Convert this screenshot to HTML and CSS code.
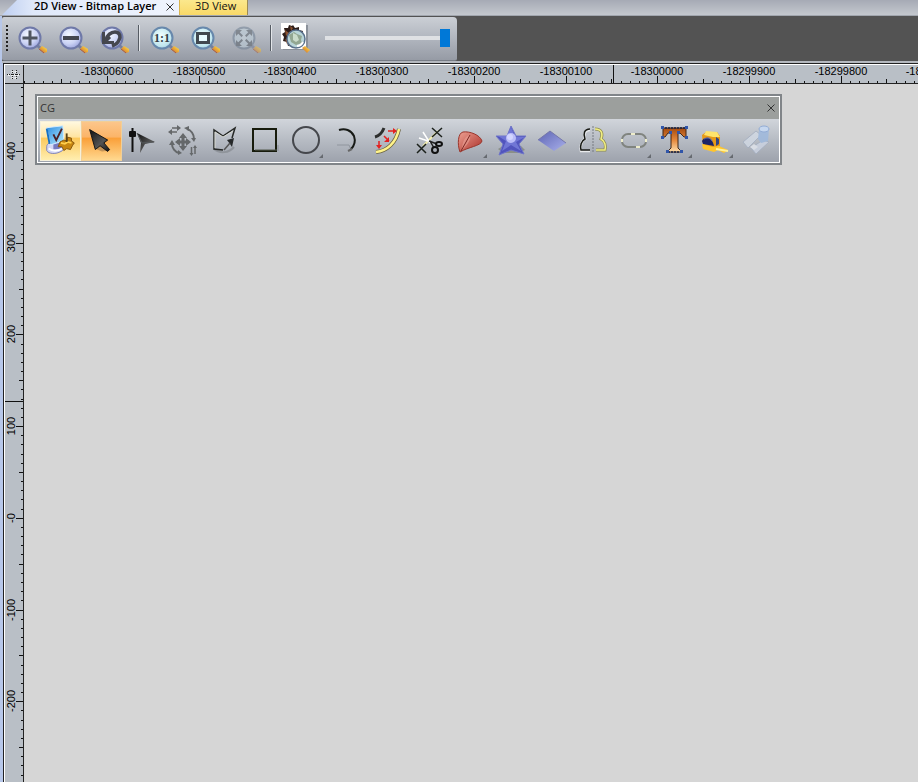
FILE: index.html
```html
<!DOCTYPE html>
<html lang="en">
<head>
<meta charset="utf-8">
<title>2D View - Bitmap Layer</title>
<link rel="stylesheet" href="styles.css">
</head>
<body>
<svg class="defs" aria-hidden="true">
  <defs>
    <radialGradient id="lens" cx=".4" cy=".35" r=".7"><stop offset="0" stop-color="#f4f8ff"/><stop offset=".6" stop-color="#cbd3f5"/><stop offset="1" stop-color="#9aa3dc"/></radialGradient>
    <radialGradient id="lensCyan" cx=".45" cy=".4" r=".7"><stop offset="0" stop-color="#f2ffff"/><stop offset=".7" stop-color="#c0e6ee"/><stop offset="1" stop-color="#8fb4d0"/></radialGradient>
    <linearGradient id="handle" x1="0" y1="1" x2="1" y2="0"><stop offset="0" stop-color="#b4683c"/><stop offset=".5" stop-color="#e8a338"/><stop offset="1" stop-color="#fff04a"/></linearGradient>
    <linearGradient id="arrow" x1="0" y1="0" x2="1" y2="1"><stop offset="0" stop-color="#111"/><stop offset=".6" stop-color="#555"/><stop offset="1" stop-color="#111"/></linearGradient>
    <linearGradient id="screen" x1="0" y1="0" x2="1" y2="1"><stop offset="0" stop-color="#2c8be0"/><stop offset="1" stop-color="#b5ecff"/></linearGradient>
    <linearGradient id="red" x1="0" y1="0" x2="1" y2="1"><stop offset="0" stop-color="#eda092"/><stop offset="1" stop-color="#a92e28"/></linearGradient>
    <linearGradient id="blue" x1="0" y1="0" x2="1" y2="1"><stop offset="0" stop-color="#5d64b4"/><stop offset="1" stop-color="#a9b0ea"/></linearGradient>
    <linearGradient id="bronze" x1="0" y1="0" x2="0" y2="1"><stop offset="0" stop-color="#a34a10"/><stop offset=".5" stop-color="#e5873a"/><stop offset="1" stop-color="#ffe0ae"/></linearGradient>
    <g id="grip">
      <path d="M25 26l3 3" stroke="#777f9c" stroke-width="3"/>
      <path d="M27 30l3-3 5 3 0 3-3 1z" fill="url(#handle)"/>
      <path d="M27 30l5 4" stroke="#a55a48" stroke-width="1"/>
    </g>
    <path id="more" d="M37 33v4h-4z" fill="#666a70"/>
  </defs>
</svg>

<div class="app">
  <nav class="tabs">
    <a class="tab active" href="#view2d">2D View - Bitmap Layer</a>
    <button class="tab-close" aria-label="Close tab"><svg viewBox="0 0 8 8"><path d="M.5.500l7 7M7.500.500l-7 7"/></svg></button>
    <a class="tab other" href="#view3d">3D View</a>
  </nav>

  <header class="bar">
    <div class="toolbar">
      <span class="gripper"></span>
      <button class="tool" aria-label="Zoom in"><svg viewBox="0 0 41 40"><use href="#grip"/><circle cx="18" cy="19" r="10.500" fill="url(#lens)" stroke="#6f79a8" stroke-width="2"/><path d="M18 11.500v15M10.500 19h15" stroke="#4f5560" stroke-width="3"/></svg></button>
      <button class="tool" aria-label="Zoom out"><svg viewBox="0 0 41 40"><use href="#grip"/><circle cx="18" cy="19" r="10.500" fill="url(#lens)" stroke="#6f79a8" stroke-width="2"/><path d="M10 19h16" stroke="#45474f" stroke-width="4"/></svg></button>
      <button class="tool" aria-label="Previous zoom"><svg viewBox="0 0 41 40"><use href="#grip"/><circle cx="18" cy="19" r="10.500" fill="url(#lens)" stroke="#6f79a8" stroke-width="2"/><path d="M12 21c1-5 5-8 9-8 5 0 6 5 4 8-1 3-4 5-7 6" fill="none" stroke="#45474f" stroke-width="3.500"/><path d="M8 13h3v9h9v3H8z" fill="#45474f"/><path d="M10 24l6-6" stroke="#45474f" stroke-width="3"/></svg></button>
      <span class="divider"></span>
      <button class="tool" aria-label="Zoom 1:1"><svg viewBox="0 0 41 40"><use href="#grip"/><circle cx="18" cy="19" r="10.500" fill="url(#lensCyan)" stroke="#6788ac" stroke-width="2"/><text class="ratio" x="18" y="23" text-anchor="middle">1:1</text></svg></button>
      <button class="tool" aria-label="Zoom to fit"><svg viewBox="0 0 41 40"><use href="#grip"/><circle cx="18" cy="19" r="10.500" fill="url(#lensCyan)" stroke="#6788ac" stroke-width="2"/><rect x="12.500" y="14.500" width="11" height="9" fill="#e8fbff" stroke="#41484f" stroke-width="3"/></svg></button>
      <button class="tool" aria-label="Zoom to selection" disabled><svg viewBox="0 0 41 40"><g opacity=".55"><use href="#grip"/><circle cx="18" cy="19" r="10.500" fill="#bccdd8" stroke="#6f7f92" stroke-width="2"/><path d="M12 13l12 12M24 13L12 25" stroke="#555d66" stroke-width="2"/><path d="M10 11h6l-6 6zM26 11v6l-6-6zM10 27v-6l6 6zM26 27h-6l6-6z" fill="#555d66"/><path d="M18 15l3 4-3 4-3-4z" fill="#c9d6df"/></g></svg></button>
      <span class="divider"></span>
      <button class="tool" aria-label="Bitmap visibility"><svg viewBox="0 0 41 40"><path d="M7 6h25v25H7z" fill="#8b919a"/><path d="M5 4h25v26H5z" fill="#fff"/><path d="M17 6l2 3 4-1 0 3 4 1-1 3 3 3-3 3 0 4-4 0-3 4-3-3-4 1-1-4-4-1 1-4-2-3 3-2-1-4 4 0 1-3 3 1z" fill="#2d1d19"/><path d="M9 11l4 3-3 3zM14 7l3 2-2 3zM9 20l3 1-1 4z" fill="#8b5231"/><path d="M26 29l3-2 5 4-3 3z" fill="url(#handle)"/><circle cx="20" cy="20" r="9" fill="#b9d5d8" stroke="#5a718c" stroke-width="1.500"/><path d="M13 16l5-3 3 2 5 2-1 4 1 3-6 2-5-3z" fill="#93a792"/><path d="M17 14l4 2 2 5-3 2-3-2z" fill="#cbdccb"/><path d="M21 27c3 0 5-2 6-4" stroke="#fff" stroke-width="2" fill="none"/></svg></button>
      <input class="opacity" type="range" min="0" max="100" value="100" aria-label="Bitmap opacity">
    </div>
  </header>

  <main class="view">
    <div class="corner"><svg viewBox="0 0 18 18"><path d="M3 10h12M7.500 6v8M10.500 6v8" stroke="#eef0f2" stroke-width="2" stroke-dasharray="2 1"/><path d="M2 9.500h14M7.500 5v9M11.500 5v9" stroke="#222" stroke-dasharray="1 1"/></svg></div>
    <svg class="ruler ruler-x" id="rulerX"></svg>
    <svg class="ruler ruler-y" id="rulerY"></svg>
    <div class="canvas">
      <section class="palette" aria-label="CG">
        <div class="palette-title"><h2>CG</h2><button class="palette-close" aria-label="Close"><svg viewBox="0 0 8 8"><path d="M.5.500l7 7M7.500.500l-7 7"/></svg></button></div>
        <div class="palette-tools">
          <button class="cg checked" aria-label="Auto apply"><svg viewBox="0 0 41 40">
            <path d="M6 26c0-4 5-5 9-4l7 2c3 2 2 6-1 7-5 3-13 3-15-1z" fill="#d5d8f5" stroke="#8083b4"/><path d="M13 22l8 0 1 6-9 1z" fill="#777ac0"/><path d="M8 28c4 3 10 3 14 0" stroke="#fff" stroke-width="2" fill="none"/>
            <path d="M6 6l17-2 1 16-14 4z" fill="url(#screen)" stroke="#d6ecff"/><path d="M6 7l3 16" stroke="#1671c5" stroke-width="2"/><path d="M13 13l3 6 6-12" fill="none" stroke="#4b1f25" stroke-width="2"/>
            <path d="M20 21l4-2 3 1 1-4 4 1 0 3 3 2-2 3-2 4-4-1-3 2-2-4-4 0z" fill="#c78611" stroke="#85540c"/><path d="M21 22l4 1 3-2 4 1" stroke="#ffd050" fill="none" stroke-width="2"/><path d="M27 12v9" stroke="#5a4318" stroke-width="2"/></svg></button>
          <button class="cg selected" aria-label="Select"><svg viewBox="0 0 41 40"><path d="M12 27l7-2 10 5-8 1z" fill="#a98050" opacity=".7"/><path d="M8 8l19 11-4 3 6 7-2 2-8-6-5 4z" fill="url(#arrow)" stroke="#111" stroke-width="1"/></svg></button>
          <button class="cg" aria-label="Reshape"><svg viewBox="0 0 41 40"><path d="M10.500 7v24" stroke="#111" stroke-width="2"/><rect x="7" y="10" width="7" height="6" rx="1" fill="#111"/><path d="M15 12l18 9-10 2-5 9 1-10z" fill="url(#arrow)"/><path d="M15 12l5 10 12-1" fill="none" stroke="#55595c"/></svg></button>
          <button class="cg" aria-label="Transform"><svg viewBox="0 0 41 40"><g fill="none" stroke="#65686a" stroke-width="2"><path d="M20 15v12M14 21h12" stroke-width="3"/><path d="M9 7h7M7 11h7" stroke-width="1.500"/><path d="M28.500 26v7M32 26v7" stroke-width="1.500"/><path d="M24 8c4 1 7 5 7 10M16 32c-4-1-7-5-7-9"/></g><path d="M20 12l4 5h-8zM20 30l4-5h-8zM12 21l5-4v8zM28 21l-5-4v8zM14 4l4 3-4 3zM9 8l-4 3 4 3zM28.500 35l-2-3h4zM32 24l-2 3h4zM31 21l-3-4h5zM9 19l-3 5h6zM21 7l5-2v5zM19 32l-4-3v5z" fill="#65686a"/></svg></button>
          <button class="cg" aria-label="Digitize"><svg viewBox="0 0 41 40"><path d="M10 28c6 5 15 4 20-2" stroke="#85898e" stroke-width="2" fill="none" opacity=".7"/><path d="M19 29l-9-1V9l9 6 12-8-3 10" fill="none" stroke="#262826" stroke-width="1.500"/><path d="M11 27V11l8 5 10-6" fill="none" stroke="#d5d7cf"/><path d="M23 19l7-2-2 9-2-3z" fill="#26292a"/><path d="M20 29l6-7" stroke="#555" stroke-width="1.500"/></svg></button>
          <button class="cg" aria-label="Rectangle"><svg viewBox="0 0 41 40"><rect x="8" y="8" width="23" height="22" fill="none" stroke="#171b0c" stroke-width="2"/><path d="M10 29h22" stroke="#555a4e"/><path d="M33 24v6" stroke="#8d929a"/></svg></button>
          <button class="cg" aria-label="Ellipse"><svg viewBox="0 0 41 40"><circle cx="20" cy="19" r="13" fill="none" stroke="#45474c" stroke-width="2"/><use href="#more"/></svg></button>
          <button class="cg" aria-label="Arc"><svg viewBox="0 0 41 40"><path d="M10 24h12l2 5" stroke="#90969e" fill="none"/><path d="M12 9c6-2 12 0 15 6 2 6 0 10-3 13" stroke="#171a16" stroke-width="2" fill="none"/><path d="M21 30l4-2" stroke="#666" stroke-width="2"/></svg></button>
          <button class="cg" aria-label="Parallel curve"><svg viewBox="0 0 41 40"><path d="M8 31c11-1 20-9 23-23" fill="none" stroke="#6a6340" stroke-width="4"/><path d="M8 31c11-1 20-9 23-23" fill="none" stroke="#fff38a" stroke-width="2.500"/><path d="M7 16c4-1 7-4 9-9" fill="none" stroke="#2d2e2d" stroke-width="3"/><path d="M20 10h7M11 20v6M16 15l5 5" stroke="#e42120" stroke-width="1.500"/><path d="M25 7l4 3-4 3zM8 24h6l-3 4zM21 16v5h-5z" fill="#e42120"/></svg></button>
          <button class="cg" aria-label="Trim"><svg viewBox="0 0 41 40"><path d="M14 25L29 10" stroke="#f1ecaf" stroke-width="2"/><path d="M8 23l9 9M8 32l9-9M23 7l10 9M23 16l10-9" stroke="#1c211c" stroke-width="1.500"/><path d="M10 17l12 4M14 11l7 11" stroke="#fff" stroke-width="1.500"/><path d="M20 20l8 3M21 20l4 7" stroke="#222" stroke-width="1.500"/><ellipse cx="30" cy="23" rx="3" ry="2" fill="none" stroke="#111" stroke-width="2"/><ellipse cx="26" cy="29" rx="3" ry="3" fill="none" stroke="#111" stroke-width="2"/></svg></button>
          <button class="cg" aria-label="Petal shape"><svg viewBox="0 0 41 40"><path d="M10 31c-3-8-2-19 3-20 7-1 17 3 19 9-1 5-14 6-22 11z" fill="url(#red)" stroke="#9a362c"/><path d="M12 29c0-8 3-13 7-15 3 3 0 8-7 15z" fill="#e9a296" opacity=".6"/><path d="M11 30l9-16" stroke="#7d2823"/><use href="#more"/></svg></button>
          <button class="cg" aria-label="Star shape"><svg viewBox="0 0 41 40"><path d="M7 28l5-3h18l4 4-7 3H12z" fill="#7e8273" opacity=".7"/><path d="M20 5l5 10h10l-7 8 5 10-13-4-12 5 4-11-7-8h11z" fill="#5154bd" stroke="#6f75c8"/><path d="M20 6l4 10h10l-9 5 5 9-10-6-9 6 4-10-8-5h9z" fill="#7076d5"/><circle cx="20" cy="17" r="5" fill="#bbbdf9"/><circle cx="19" cy="16" r="3" fill="#d3d6ff"/></svg></button>
          <button class="cg" aria-label="Diamond shape"><svg viewBox="0 0 41 40"><path d="M6 19l12-9 16 12-12 8z" fill="url(#blue)"/><path d="M6 19l12-9 16 12" fill="none" stroke="#7476a8"/></svg></button>
          <button class="cg" aria-label="Mirror"><svg viewBox="0 0 41 40"><path d="M20 5v27" stroke="#777b81" stroke-dasharray="2 1"/><path d="M17 9c-5 0-7 4-5 9-4 2-5 8-4 12h9" fill="none" stroke="#e8eaec" stroke-width="2.500"/><path d="M17 8c-6 0-7 5-5 10-4 2-5 7-4 11h9" fill="none" stroke="#171914" stroke-width="1.500"/><path d="M22 8c7 0 8 5 6 10 4 2 5 7 4 11h-9" fill="none" stroke="#8d8b50" stroke-width="3"/><path d="M22 8c7 0 8 5 6 10 4 2 5 7 4 11h-9" fill="none" stroke="#f2ef83" stroke-width="1.500"/></svg></button>
          <button class="cg" aria-label="Outline"><svg viewBox="0 0 41 40"><rect x="8" y="13" width="24" height="13" rx="6" fill="none" stroke="#80847f" stroke-width="2"/><path d="M8 18v3M17 13h4M22 26h4M32 18v3" stroke="#edecca" stroke-width="2"/><use href="#more"/></svg></button>
          <button class="cg" aria-label="Text"><svg viewBox="0 0 41 40"><path d="M8 7h23v9h-2l-4-4h-2v15l4 4H12l4-4V12h-3l-3 4H8z" fill="url(#bronze)" stroke="#402719"/><path d="M7 7h24M13 31h14" stroke="#182243" stroke-width="1.500" stroke-dasharray="2 1"/><path d="M6 5h3v3H6zM30 5h3v3h-3zM6 15h3v3H6zM30 15h3v3h-3zM14 10h3v3h-3zM22 10h3v3h-3zM11 29h3v3h-3zM25 29h3v3h-3z" fill="#3055a9"/><use href="#more"/></svg></button>
          <button class="cg" aria-label="Measure"><svg viewBox="0 0 41 40"><path d="M6 14l4-3 11 0 3 4v10l-7 3-10-4z" fill="#e69a18"/><path d="M10 10l11 1 3 5-7 0-9-2z" fill="#ffe46c"/><path d="M6 20c2-5 10-5 12 5l-11-2z" fill="#1b2467"/><path d="M8 18c4-2 7-1 8 2" stroke="#656eb0" fill="none"/><path d="M20 16l3 2v5l-3 2z" fill="#334583"/><path d="M6 23l11 3 6-1 9 4-4 3-6-3-4 2-11-3z" fill="#ffc52c"/><path d="M20 28l12 2" stroke="#fff19b" stroke-width="2"/><use href="#more"/></svg></button>
          <button class="cg" aria-label="Library" disabled><svg viewBox="0 0 41 40"><g opacity=".8"><path d="M6 21l13-11 5 4-13 13z" fill="#d2dae5" stroke="#a5b0c2"/><path d="M14 27l12-8 6 2-13 12z" fill="#ccd4e3" stroke="#a5b0c2"/><path d="M22 9l10-1-1 12-7 2-3-4z" fill="#9db9df"/><ellipse cx="27" cy="8" rx="5" ry="3" fill="#c7dbf7" stroke="#86a5d6"/><path d="M13 26l4-3 4 3-4 3z" fill="#e4e8ef"/></g></svg></button>
        </div>
      </section>
    </div>
  </main>
</div>
<script src="rulers.js"></script>
</body>
</html>
```
FILE: styles.css
```css
* { box-sizing: border-box; }
html, body { height: 100%; margin: 0; overflow: hidden; }
body { font: 11px/14px "Open Sans", "Noto Sans", sans-serif; color: #111; }
button { border: 0; padding: 0; background: none; color: inherit; font: inherit; }
button svg { display: block; width: 100%; height: 100%; }
.defs { position: absolute; width: 0; height: 0; }

.app { height: 100%; display: flex; flex-direction: column; background: #b7c7e9; }

.tabs { height: 16px; flex: none; display: flex; background: linear-gradient(#a6aab5, #c4c8ce); border-bottom: 1px solid #a1a6ae; }
.tab { color: #111; text-decoration: none; line-height: 12px; white-space: nowrap; }
.active { width: 163px; padding-left: 34px; font-weight: 600; color: #000; background: linear-gradient(90deg, #bccdf0, #dfe8f9 20%, #eef3fd); clip-path: polygon(17px 0, 100% 0, 100% 100%, 2px 100%); }
.tab-close { width: 16px; padding: 3px 5px 4px 3px; background: #eef3fd; }
.tab-close svg, .palette-close svg { width: 8px; height: 8px; fill: none; stroke: #333; }
.other { width: 69px; padding-left: 15px; background: linear-gradient(#fbe88d, #f9d968); border-left: 1px solid #d9b44e; border-right: 1px solid #9b8a55; }

.bar { height: 47px; flex: none; margin-left: 2px; padding-top: 1px; display: flex; background: #535353; border-bottom: 2px solid #b5b9bf; }
.toolbar { display: flex; align-items: flex-end; padding: 0 7px 1px 4px; background: linear-gradient(#cbcfd5, #aeb3bc 55%, #969ba5); border-bottom: 1px solid #777c85; border-radius: 2px 4px 2px 2px; }
.gripper { align-self: center; width: 3px; height: 27px; margin-right: 3px; background: repeating-linear-gradient(#222 0 2px, transparent 2px 4px) 0 0 / 2px 100% no-repeat; }
.tool { width: 41px; height: 40px; }
.ratio { font: 700 12px "Liberation Serif", serif; fill: #333d45; }
.divider { align-self: center; width: 2px; height: 26px; margin: 0 4px 0 3px; background: linear-gradient(90deg, #555b63 50%, #e2e5e9 50%); }
.opacity { align-self: center; appearance: none; width: 125px; height: 20px; margin: 0 0 0 8px; background: none; }
.opacity::-webkit-slider-runnable-track { height: 4px; background: #dfe1e4; }
.opacity::-webkit-slider-thumb { appearance: none; width: 10px; height: 18px; margin-top: -7px; background: #0078d7; }

.view { flex: 1; min-height: 0; margin-left: 3px; display: grid; grid-template: 19px 1fr / 19px 1fr; border: solid #222; border-width: 1px 0 0 1px; box-shadow: inset 1px 1px #fff; padding: 1px 0 0 1px; }
.corner { background: #bcc1c8; border-right: 1px solid #222; border-bottom: 1px solid #222; }
.corner svg { display: block; }
.ruler { display: block; width: 100%; height: 100%; background: #b9bfc6; overflow: hidden; font: 11px "Liberation Sans", sans-serif; }
.ruler-x { border-bottom: 1px solid #222; }
.ruler-y { border-right: 1px solid #222; }
.ruler text { text-anchor: middle; fill: #000; }
.ruler path { stroke: #111; fill: none; }
.canvas { position: relative; min-width: 0; background: #d6d6d6; }

.palette { position: absolute; top: 10px; left: 11px; border: 2px solid #818589; background: #fff; padding: 1px; }
.palette-title { height: 22px; display: flex; justify-content: space-between; align-items: center; padding: 0 4px 0 2px; background: #9c9f9d; color: #333; }
.palette-title h2 { margin: 0; font-size: 11px; font-weight: 400; }
.palette-tools { display: flex; padding: 2px 1px 1px 2px; background: linear-gradient(#d1d5db, #b6bbc3 50%, #9da2ac); }
.cg { width: 41px; height: 40px; }
.checked { border: 1px solid #f6f0db; background: linear-gradient(#fff8df, #ffe4a0 40%, #fcc95c 42%, #ffeeb0); }
.selected { border: 1px solid #f0cf98; background: linear-gradient(#fcc68b, #fbb468 40%, #fa9f38 42%, #ffd88f); }
```
FILE: rulers.js
```js
const SVG = "http://www.w3.org/2000/svg";
const STEP = 91.7;

function label(svg, text, x, y, rotate) {
  const t = document.createElementNS(SVG, "text");
  t.textContent = text;
  t.setAttribute("x", x);
  t.setAttribute("y", y);
  if (rotate) t.setAttribute("transform", `rotate(-90 ${x} ${y})`);
  svg.append(t);
}

/* Ticks every tenth of a step; the fifth and tenth are longer. */
function drawRuler(svg, vertical, origin, cursor, textAt) {
  const length = vertical ? svg.clientHeight : svg.clientWidth;
  svg.replaceChildren();
  let d = "";
  for (let i = -9; origin + i * STEP / 10 < length + 30; i++) {
    const p = Math.round(origin + i * STEP / 10) + 0.5;
    const size = i % 10 === 0 ? 7 : i % 5 === 0 ? 4 : 2;
    d += vertical ? `M18 ${p}h${-size}` : `M${p} 18v${-size}`;
    if (i % 10 === 0) {
      const middle = Math.floor(p);
      if (!vertical) label(svg, textAt(i / 10), middle, 10);
      else if (middle < length) label(svg, textAt(i / 10), 10, middle, true);
    }
  }
  d += vertical ? `M0 ${cursor + 0.5}h18` : `M${cursor + 0.5} 0v18`;
  const path = document.createElementNS(SVG, "path");
  path.setAttribute("d", d);
  svg.append(path);
}

function draw() {
  drawRuler(document.getElementById("rulerX"), false, 83, 589,
    k => String(-18300600 + 100 * k));
  drawRuler(document.getElementById("rulerY"), true, 67, 317,
    k => k === 4 ? "-0" : String(400 - 100 * k));
}

draw();
addEventListener("resize", draw);
```
